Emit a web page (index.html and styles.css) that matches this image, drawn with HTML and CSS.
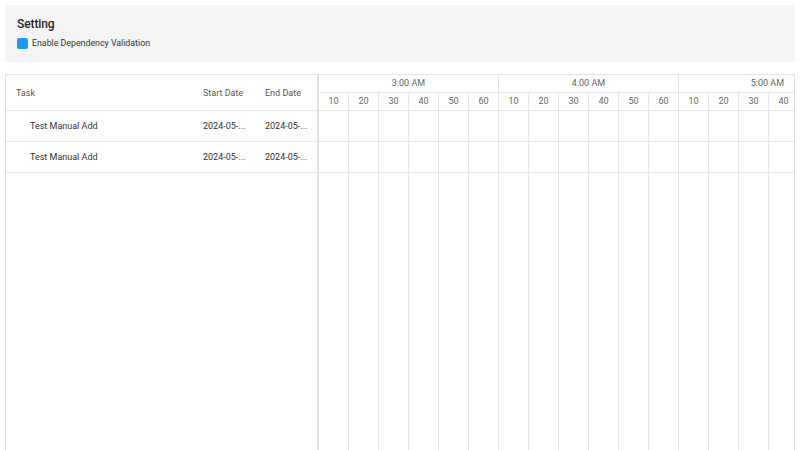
FILE: index.html
```html
<!DOCTYPE html>
<html>
<head>
<meta charset="utf-8">
<link rel="stylesheet" href="styles.css">
</head>
<body>
<div class="settings">
  <div class="settings-title">Setting</div>
  <label class="check-row"><span class="checkbox"></span><span>Enable Dependency Validation</span></label>
</div>
<div class="gantt">
  <div class="grid">
    <div class="grid-head">
      <div class="c-task">Task</div>
      <div class="c-start">Start Date</div>
      <div class="c-end">End Date</div>
    </div>
    <div class="grid-row">
      <div class="c-task indent">Test Manual Add</div>
      <div class="c-start">2024-05-...</div>
      <div class="c-end">2024-05-...</div>
    </div>
    <div class="grid-row">
      <div class="c-task indent">Test Manual Add</div>
      <div class="c-start">2024-05-...</div>
      <div class="c-end">2024-05-...</div>
    </div>
  </div>
  <div class="timeline">
    <div class="tl-head">
      <div class="hours">
        <div class="hour">3:00 AM</div>
        <div class="hour">4:00 AM</div>
        <div class="hour last">5:00 AM</div>
      </div>
      <div class="minutes">
        <div class="min">10</div><div class="min">20</div><div class="min">30</div><div class="min">40</div><div class="min">50</div><div class="min">60</div>
        <div class="min">10</div><div class="min">20</div><div class="min">30</div><div class="min">40</div><div class="min">50</div><div class="min">60</div>
        <div class="min">10</div><div class="min">20</div><div class="min">30</div><div class="min">40</div>
      </div>
    </div>
    <div class="tl-body">
      <div class="col"><div class="cell"></div><div class="cell"></div></div>
      <div class="col"><div class="cell"></div><div class="cell"></div></div>
      <div class="col"><div class="cell"></div><div class="cell"></div></div>
      <div class="col"><div class="cell"></div><div class="cell"></div></div>
      <div class="col"><div class="cell"></div><div class="cell"></div></div>
      <div class="col"><div class="cell"></div><div class="cell"></div></div>
      <div class="col"><div class="cell"></div><div class="cell"></div></div>
      <div class="col"><div class="cell"></div><div class="cell"></div></div>
      <div class="col"><div class="cell"></div><div class="cell"></div></div>
      <div class="col"><div class="cell"></div><div class="cell"></div></div>
      <div class="col"><div class="cell"></div><div class="cell"></div></div>
      <div class="col"><div class="cell"></div><div class="cell"></div></div>
      <div class="col"><div class="cell"></div><div class="cell"></div></div>
      <div class="col"><div class="cell"></div><div class="cell"></div></div>
      <div class="col"><div class="cell"></div><div class="cell"></div></div>
      <div class="col"><div class="cell"></div><div class="cell"></div></div>
    </div>
  </div>
</div>
</body>
</html>
```

FILE: styles.css
```css
html, body {
  margin: 0;
  padding: 0;
  background: #ffffff;
  overflow: hidden;
}
body {
  font-family: Roboto, "Liberation Sans", sans-serif;
  color: #333;
  width: 800px;
  height: 450px;
}
.settings {
  margin: 5px 5px 0 5px;
  height: 57px;
  box-sizing: border-box;
  background: #f4f4f4;
  padding: 12px 12px 0 12px;
}
.settings-title {
  font-size: 12px;
  font-weight: 500;
  color: #262626;
  line-height: 14px;
  letter-spacing: -0.1px;
}
.check-row {
  display: flex;
  align-items: center;
  gap: 4px;
  margin-top: 7px;
  font-size: 8.8px;
  color: #333;
  line-height: 11px;
}
.checkbox {
  width: 11px;
  height: 11px;
  border-radius: 2px;
  background: #1a9bef;
  display: inline-block;
}
.gantt {
  margin: 12px 5px 0 5px;
  height: 376px;
  border: 1px solid #e2e2e2;
  border-bottom: none;
  display: flex;
  overflow: hidden;
}
.grid {
  width: 311px;
  flex: none;
  border-right: 2px solid #e0e0e0;
  font-size: 9px;
}
.grid-head, .grid-row {
  display: flex;
  align-items: center;
  border-bottom: 1px solid #e6e6e6;
}
.grid-head {
  height: 35px;
  padding-top: 1px;
  box-sizing: border-box;
  height: 36px;
  color: #555;
}
.grid-row {
  color: #333;
  padding-bottom: 1px;
  box-sizing: border-box;
  height: 31px;
}
.c-task {
  width: 187px;
  padding-left: 10px;
  flex: none;
  white-space: nowrap;
}
.c-task.indent {
  padding-left: 24px;
  width: 173px;
}
.c-start {
  width: 62px;
  flex: none;
  white-space: nowrap;
}
.c-end {
  width: 52px;
  flex: none;
  white-space: nowrap;
}
.timeline {
  flex: 1;
  min-width: 0;
  overflow: hidden;
}
.tl-head {
  font-size: 9px;
  color: #666;
}
.hours, .minutes, .tl-body {
  display: flex;
  white-space: nowrap;
}
.hours {
  height: 17px;
  border-bottom: 1px solid #e6e6e6;
}
.hour {
  width: 179px;
  flex: none;
  border-right: 1px solid #e2e2e2;
  text-align: center;
  line-height: 17px;
}
.hour.last {
  width: 105px;
  border-right: none;
  text-align: right;
  padding-right: 10px;
}
.minutes {
  height: 17px;
  border-bottom: 1px solid #e6e6e6;
}
.min {
  width: 29px;
  flex: none;
  border-right: 1px solid #e6e6e6;
  text-align: center;
  line-height: 17px;
}
.tl-body {
  height: 340px;
}
.col {
  width: 29px;
  flex: none;
  border-right: 1px solid #e6e6e6;
}
.cell {
  height: 30px;
  border-bottom: 1px solid #e6e6e6;
}
```
